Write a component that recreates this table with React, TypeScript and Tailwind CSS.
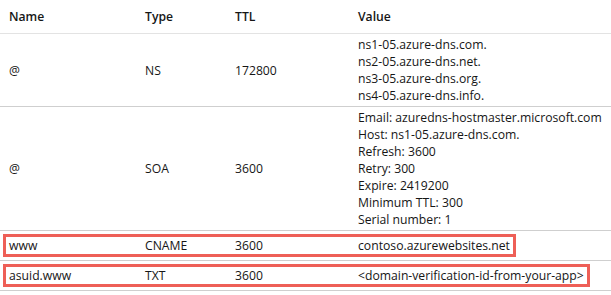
import React from 'react';

type DnsRecord = {
  name: string;
  type: string;
  ttl: string;
  value: string[];
  highlight?: boolean;
};

const records: DnsRecord[] = [
  {
    name: '@',
    type: 'NS',
    ttl: '172800',
    value: ['ns1-05.azure-dns.com.', 'ns2-05.azure-dns.net.', 'ns3-05.azure-dns.org.', 'ns4-05.azure-dns.info.'],
  },
  {
    name: '@',
    type: 'SOA',
    ttl: '3600',
    value: [
      'Email: azuredns-hostmaster.microsoft.com',
      'Host: ns1-05.azure-dns.com.',
      'Refresh: 3600',
      'Retry: 300',
      'Expire: 2419200',
      'Minimum TTL: 300',
      'Serial number: 1',
    ],
  },
  { name: 'www', type: 'CNAME', ttl: '3600', value: ['contoso.azurewebsites.net'], highlight: true },
  { name: 'asuid.www', type: 'TXT', ttl: '3600', value: ['<domain-verification-id-from-your-app>'], highlight: true },
];

const cols = 'grid grid-cols-[136px_90px_123px_auto] items-center';

export default function App() {
  return (
    <div className="w-[611px] h-[295px] bg-white text-[#161616] text-[12.2px] leading-[17px] font-['Open_Sans',sans-serif] whitespace-nowrap overflow-hidden">
      {/* Header */}
      <div className={`${cols} h-[34px] pl-[9px] border-b border-[#e3e3e3] font-semibold`}>
        <div>Name</div>
        <div>Type</div>
        <div>TTL</div>
        <div>Value</div>
      </div>

      {records.map((r, i) =>
        r.highlight ? (
          <div key={i} className="border-b border-[#cfcfcf] py-[3px] pl-[3px]">
            <div className="inline-grid grid-cols-[136px_90px_123px_auto] items-center border-[3px] border-[#ee5f57] pl-[3px] pr-[3px]">
              <div>{r.name}</div>
              <div>{r.type}</div>
              <div>{r.ttl}</div>
              <div>{r.value[0]}</div>
            </div>
          </div>
        ) : (
          <div key={i} className={`${cols} pl-[9px] py-[2px] border-b border-[#cfcfcf]`}>
            <div>{r.name}</div>
            <div>{r.type}</div>
            <div>{r.ttl}</div>
            <div className="flex flex-col">
              {r.value.map((v) => (
                <div key={v}>{v}</div>
              ))}
            </div>
          </div>
        )
      )}
    </div>
  );
}
